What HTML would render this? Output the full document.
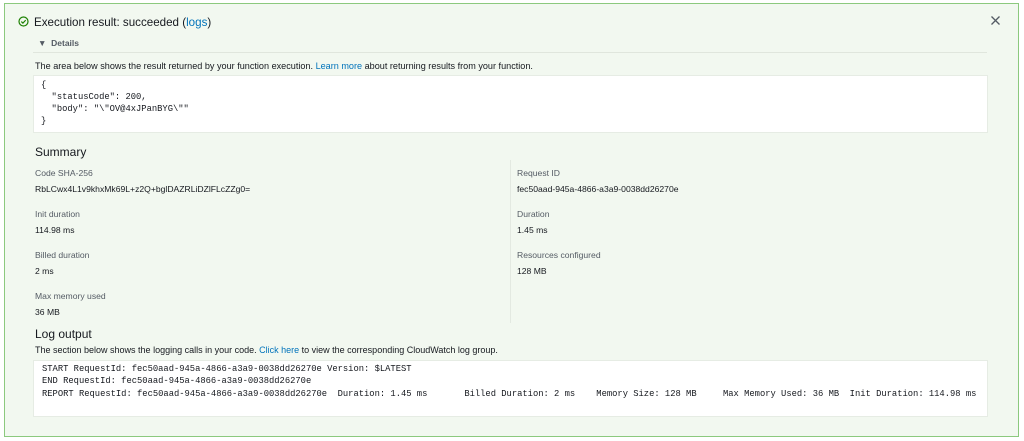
<!DOCTYPE html>
<html><head><style>
body{margin:0;width:1024px;height:441px;background:#fff;font-family:"Liberation Sans",sans-serif;position:relative;overflow:hidden;color:#16191f}
.box{position:absolute;left:4px;top:3px;width:1013px;height:432px;border:1px solid #8cc97e;background:#f2f8f0}
.a{position:absolute;white-space:nowrap}
.lbl{font-size:8.6px;color:#545b64}
.val{font-size:8.6px;color:#16191f}
.mono{font-family:"Liberation Mono",monospace;font-size:8.8px;color:#16191f}
a{color:#0073bb;text-decoration:none}
.ta{position:absolute;background:#fff;border:1px solid #e6ece4}
</style></head><body>
<div class="box"></div>
<svg class="a" style="left:18px;top:16px" width="11" height="11" viewBox="0 0 11 11"><circle cx="5.5" cy="5.5" r="4.5" fill="none" stroke="#1d8102" stroke-width="1.2"/><path d="M3.3 5.6l1.6 1.5 2.8-3" fill="none" stroke="#1d8102" stroke-width="1.2"/></svg>
<div class="a" style="left:34px;top:16px;font-size:11.6px">Execution result: succeeded (<a>logs</a>)</div>
<svg class="a" style="left:990px;top:15px" width="11" height="11" viewBox="0 0 11 11"><path d="M1.5 1.5l8 8M9.5 1.5l-8 8" stroke="#545b64" stroke-width="1.3"/></svg>
<div class="a" style="left:38px;top:38px;font-size:8.5px;font-weight:bold;color:#545b64">▼&nbsp;&nbsp;Details</div>
<div class="a" style="left:33px;top:52px;width:954px;height:1px;background:#e0e6dd"></div>
<div class="a" style="left:35px;top:61px;font-size:9.1px">The area below shows the result returned by your function execution. <a>Learn more</a> about returning results from your function.</div>
<div class="ta" style="left:33px;top:75px;width:953px;height:56px"></div>
<div class="a mono" style="left:41px;top:79px;line-height:12px;white-space:pre">{
  "statusCode": 200,
  "body": "\"OV@4xJPanBYG\""
}</div>
<div class="a" style="left:35px;top:145px;font-size:12px">Summary</div>
<div class="a" style="left:510px;top:160px;width:1px;height:163px;background:#e3e9e1"></div>
<div class="a lbl" style="left:35px;top:168px">Code SHA-256</div>
<div class="a val" style="left:35px;top:184px">RbLCwx4L1v9khxMk69L+z2Q+bglDAZRLiDZlFLcZZg0=</div>
<div class="a lbl" style="left:35px;top:209px">Init duration</div>
<div class="a val" style="left:35px;top:225px">114.98 ms</div>
<div class="a lbl" style="left:35px;top:250px">Billed duration</div>
<div class="a val" style="left:35px;top:266px">2 ms</div>
<div class="a lbl" style="left:35px;top:291px">Max memory used</div>
<div class="a val" style="left:35px;top:307px">36 MB</div>
<div class="a lbl" style="left:517px;top:168px">Request ID</div>
<div class="a val" style="left:517px;top:184px">fec50aad-945a-4866-a3a9-0038dd26270e</div>
<div class="a lbl" style="left:517px;top:209px">Duration</div>
<div class="a val" style="left:517px;top:225px">1.45 ms</div>
<div class="a lbl" style="left:517px;top:250px">Resources configured</div>
<div class="a val" style="left:517px;top:266px">128 MB</div>
<div class="a" style="left:35px;top:327px;font-size:12px">Log output</div>
<div class="a" style="left:35px;top:345px;font-size:9px">The section below shows the logging calls in your code. <a>Click here</a> to view the corresponding CloudWatch log group.</div>
<div class="ta" style="left:33px;top:360px;width:953px;height:55px"></div>
<div class="a mono" style="left:42px;top:363px;line-height:12.3px;white-space:pre">START RequestId: fec50aad-945a-4866-a3a9-0038dd26270e Version: $LATEST
END RequestId: fec50aad-945a-4866-a3a9-0038dd26270e
REPORT RequestId: fec50aad-945a-4866-a3a9-0038dd26270e  Duration: 1.45 ms       Billed Duration: 2 ms    Memory Size: 128 MB     Max Memory Used: 36 MB  Init Duration: 114.98 ms</div>
</body></html>
